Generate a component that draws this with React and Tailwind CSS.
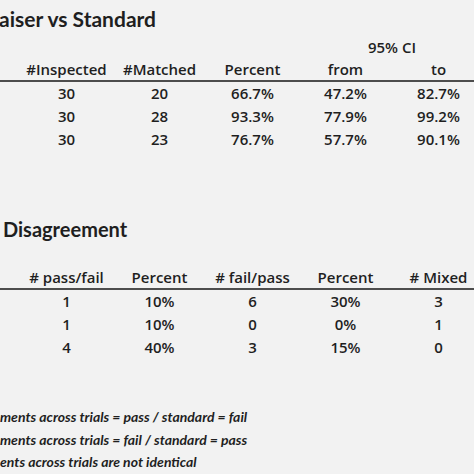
const agreement = [
  ['30', '20', '66.7%', '47.2%', '82.7%'],
  ['30', '28', '93.3%', '77.9%', '99.2%'],
  ['30', '23', '76.7%', '57.7%', '90.1%'],
]

const disagreement = [
  ['1', '10%', '6', '30%', '3'],
  ['1', '10%', '0', '0%', '1'],
  ['4', '40%', '3', '15%', '0'],
]

const notes = [
  'ments across trials = pass / standard = fail',
  'ments across trials = fail / standard = pass',
  'ents across trials are not identical',
]

const Row = ({ cells, header }) => (
  <div className={`flex h-[23px] items-center pl-[20px] ${header ? 'border-b-2 border-[#4d4d4d]' : ''}`}>
    {cells.map((c, i) => (
      <div key={i} className="w-[93px] shrink-0 text-center">{c}</div>
    ))}
  </div>
)

const App = () => {
  return (
    <div className="w-[474px] h-[474px] overflow-hidden bg-[#f2f2f2] text-[#1f1f1f] font-semibold text-[15px] leading-none" style={{ fontFamily: '"Open Sans", "Noto Sans", sans-serif' }}>
      <div className="h-[36px] flex items-center text-[21px] font-bold -ml-[1px]" style={{ fontFamily: 'Lato, sans-serif' }}>aiser vs Standard</div>

      <div className="flex h-[23px] items-center pl-[299px]">
        <div className="w-[186px] shrink-0 text-center">95% CI</div>
      </div>
      <Row header cells={['#Inspected', '#Matched', 'Percent', 'from', 'to']} />
      {agreement.map((r, i) => <Row key={i} cells={r} />)}

      <div className="h-[60px]"></div>
      <div className="h-[36px] flex items-center text-[20px] font-bold pl-[3px]" style={{ fontFamily: 'Lato, sans-serif' }}>Disagreement</div>
      <div className="h-[20px]"></div>
      <Row header cells={['# pass/fail', 'Percent', '# fail/pass', 'Percent', '# Mixed']} />
      {disagreement.map((r, i) => <Row key={i} cells={r} />)}

      <div className="h-[47px]"></div>
      <div className="italic font-bold text-[14px]" style={{ fontFamily: 'Lato, sans-serif' }}>
        {notes.map((n, i) => (
          <div key={i} className="h-[22.5px] flex items-center whitespace-nowrap">{n}</div>
        ))}
      </div>
    </div>
  )
}

export default App
